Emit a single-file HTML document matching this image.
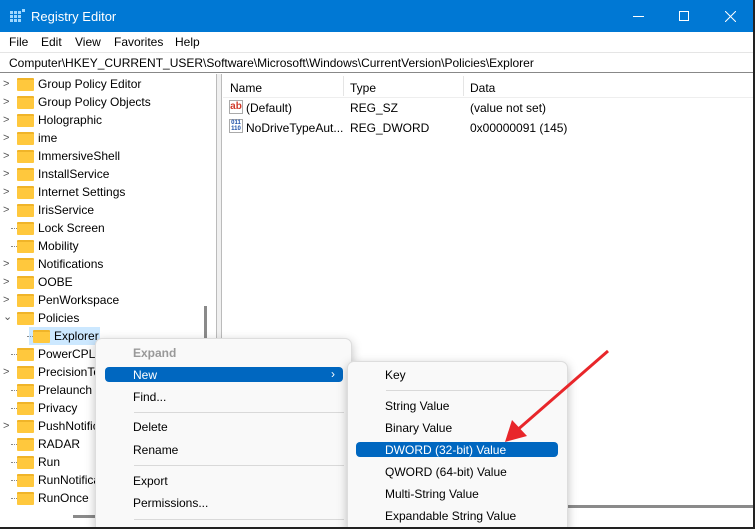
<!DOCTYPE html>
<html style="width:755px;height:529px;overflow:hidden"><head><style>
*{margin:0;padding:0;box-sizing:border-box}
body{width:755px;height:529px;overflow:hidden;background:#fff;font-family:"Liberation Sans",sans-serif;font-size:12px;color:#000;position:relative}
.abs{position:absolute}
.title{left:0;top:0;width:755px;height:32px;background:#0078d4;color:#fff}
.menu span{position:absolute;top:35px}
.row{position:absolute;left:0;height:18px;line-height:18px;white-space:nowrap}
.fold{position:absolute;left:17px;top:3px;width:17px;height:13px;background:#ffc83d;border-radius:1px;border-top:2px solid #f0b429}
.lbl{position:absolute;left:38px;top:0}
.chev{position:absolute;left:3px;top:0;color:#555;font-size:11px}
.dot{position:absolute;left:11px;top:9px;width:6px;border-top:1px dotted #888}
.cm{background:#f9f9f9;border:1px solid #ddd;border-bottom:none;border-radius:7px 7px 0 0;box-shadow:0 3px 10px rgba(0,0,0,.25)}
.it{position:absolute;white-space:nowrap}
.sep{position:absolute;height:1px;background:#d9d9d9}
.hl{position:absolute;background:#0067c0;border-radius:4px}
</style></head><body>
<div class="abs title">
 <svg class="abs" style="left:10px;top:9px" width="16" height="14"><g fill="#9fd8ff"><rect x="0" y="2" width="3" height="3"/><rect x="4" y="2" width="3" height="3"/><rect x="8" y="2" width="3" height="3"/><rect x="0" y="6" width="3" height="3"/><rect x="4" y="6" width="3" height="3"/><rect x="8" y="6" width="3" height="3"/><rect x="0" y="10" width="3" height="3"/><rect x="4" y="10" width="3" height="3"/><rect x="8" y="10" width="3" height="3"/><rect x="12" y="0" width="3" height="3"/></g></svg>
 <div class="abs" style="left:31px;top:9px;font-size:13px">Registry Editor</div>
 <div class="abs" style="left:633px;top:16px;width:11px;border-top:1px solid #fff"></div>
 <div class="abs" style="left:679px;top:11px;width:10px;height:10px;border:1px solid #fff"></div>
 <svg class="abs" style="left:725px;top:11px" width="11" height="11"><path d="M0 0L11 11M11 0L0 11" stroke="#fff"/></svg>
</div>
<div class="menu"><span style="left:9px">File</span><span style="left:41px">Edit</span><span style="left:75px">View</span><span style="left:114px">Favorites</span><span style="left:175px">Help</span></div>
<div class="abs" style="left:0;top:52px;width:753px;height:21px;border-top:1px solid #e5e5e5;border-bottom:1px solid #888"></div>
<div class="abs" style="left:9px;top:56px">Computer\HKEY_CURRENT_USER\Software\Microsoft\Windows\CurrentVersion\Policies\Explorer</div>
<div class="abs" style="left:0;top:74px;width:216px;height:453px;overflow:hidden">
<div class="abs" style="left:204px;top:232px;width:3px;height:110px;background:#8a8a8a"></div>
<div class="abs" style="left:73px;top:441px;width:140px;height:3px;background:#8a8a8a"></div>
</div>
<div class="abs" style="left:216px;top:74px;width:6px;height:453px;border-left:1px solid #bbb;border-right:1px solid #bbb;background:#f0f0f0"></div>
<div id="tree"></div>
<div class="abs" style="left:223px;top:74px;width:530px;height:24px;border-bottom:1px solid #eee"></div>
<div class="abs" style="left:343px;top:76px;height:20px;border-left:1px solid #e5e5e5"></div>
<div class="abs" style="left:463px;top:76px;height:20px;border-left:1px solid #e5e5e5"></div>
<div class="abs" style="left:230px;top:81px">Name</div>
<div class="abs" style="left:350px;top:81px">Type</div>
<div class="abs" style="left:470px;top:81px">Data</div>
<div class="abs" style="left:229px;top:100px;width:14px;height:14px;border:1px solid #aaa;color:#d03a2a;font-weight:bold;font-size:10px;line-height:12px;text-align:center">ab</div>
<div class="abs" style="left:246px;top:101px">(Default)</div><div class="abs" style="left:350px;top:101px">REG_SZ</div><div class="abs" style="left:470px;top:101px">(value not set)</div>
<div class="abs" style="left:229px;top:119px;width:14px;height:14px;border:1px solid #aaa;color:#1d4fa8;font-weight:bold;font-size:6px;line-height:6px;text-align:center">011<br>110</div>
<div class="abs" style="left:246px;top:121px">NoDriveTypeAut...</div><div class="abs" style="left:350px;top:121px">REG_DWORD</div><div class="abs" style="left:470px;top:121px">0x00000091 (145)</div>
<div class="abs" style="left:567px;top:505px;width:186px;height:3px;background:#8a8a8a"></div>
<div class="abs cm" style="left:95px;top:338px;width:257px;height:191px">
 <div class="it" style="left:37px;top:7px;color:#999;font-weight:bold">Expand</div>
 <div class="hl" style="left:9px;top:28px;width:238px;height:15px"></div>
 <div class="it" style="left:37px;top:29px;color:#fff">New</div><div class="it" style="left:235px;top:28px;color:#fff">›</div>
 <div class="it" style="left:37px;top:51px">Find...</div>
 <div class="sep" style="left:38px;top:73px;width:210px"></div>
 <div class="it" style="left:37px;top:81px">Delete</div>
 <div class="it" style="left:37px;top:104px">Rename</div>
 <div class="sep" style="left:38px;top:126px;width:210px"></div>
 <div class="it" style="left:37px;top:135px">Export</div>
 <div class="it" style="left:37px;top:157px">Permissions...</div>
 <div class="sep" style="left:38px;top:180px;width:210px"></div>
</div>
<div class="abs cm" style="left:347px;top:361px;width:221px;height:168px">
 <div class="it" style="left:37px;top:6px">Key</div>
 <div class="sep" style="left:38px;top:28px;width:173px"></div>
 <div class="it" style="left:37px;top:37px">String Value</div>
 <div class="it" style="left:37px;top:59px">Binary Value</div>
 <div class="hl" style="left:8px;top:80px;width:202px;height:15px"></div>
 <div class="it" style="left:37px;top:81px;color:#fff">DWORD (32-bit) Value</div>
 <div class="it" style="left:37px;top:103px">QWORD (64-bit) Value</div>
 <div class="it" style="left:37px;top:125px">Multi-String Value</div>
 <div class="it" style="left:37px;top:147px">Expandable String Value</div>
</div>
<div class="abs" style="left:753px;top:0;width:2px;height:529px;background:#222"></div>
<div class="abs" style="left:0;top:527px;width:755px;height:2px;background:#222"></div>
<svg class="abs" style="left:0;top:0" width="755" height="529"><path d="M608 351L515 432" stroke="#e8262a" stroke-width="3"/><path d="M505 442L512 420L527 436Z" fill="#e8262a"/></svg>
<script>
var items=[["Group Policy Editor",">"],["Group Policy Objects",">"],["Holographic",">"],["ime",">"],["ImmersiveShell",">"],["InstallService",">"],["Internet Settings",">"],["IrisService",">"],["Lock Screen","."],["Mobility","."],["Notifications",">"],["OOBE",">"],["PenWorkspace",">"],["Policies","v"],["Explorer","e"],["PowerCPL","."],["PrecisionTouchPad",">"],["Prelaunch","."],["Privacy","."],["PushNotifications",">"],["RADAR","."],["Run","."],["RunNotification","."],["RunOnce","."]];
var h="";items.forEach(function(it,i){var y=75+i*18;var c="";
if(it[1]==">")c='<span class="chev">&gt;</span>';else if(it[1]=="v")c='<span class="chev" style="top:-1px">&#8964;</span>';else if(it[1]==".")c='<span class="dot"></span>';
if(it[1]=="e"){h+='<div class="row" style="top:'+y+'px;width:100px"><div class="abs" style="left:29px;top:0;width:71px;height:18px;background:#cce8ff"></div><span class="dot" style="left:27px;width:6px"></span><div class="fold" style="left:33px"></div><span class="lbl" style="left:54px">Explorer</span></div>';return;}
h+='<div class="row" style="top:'+y+'px;width:203px;overflow:hidden">'+c+'<div class="fold"></div><span class="lbl">'+it[0]+'</span></div>';});
document.getElementById("tree").innerHTML=h;
</script>
</body></html>
